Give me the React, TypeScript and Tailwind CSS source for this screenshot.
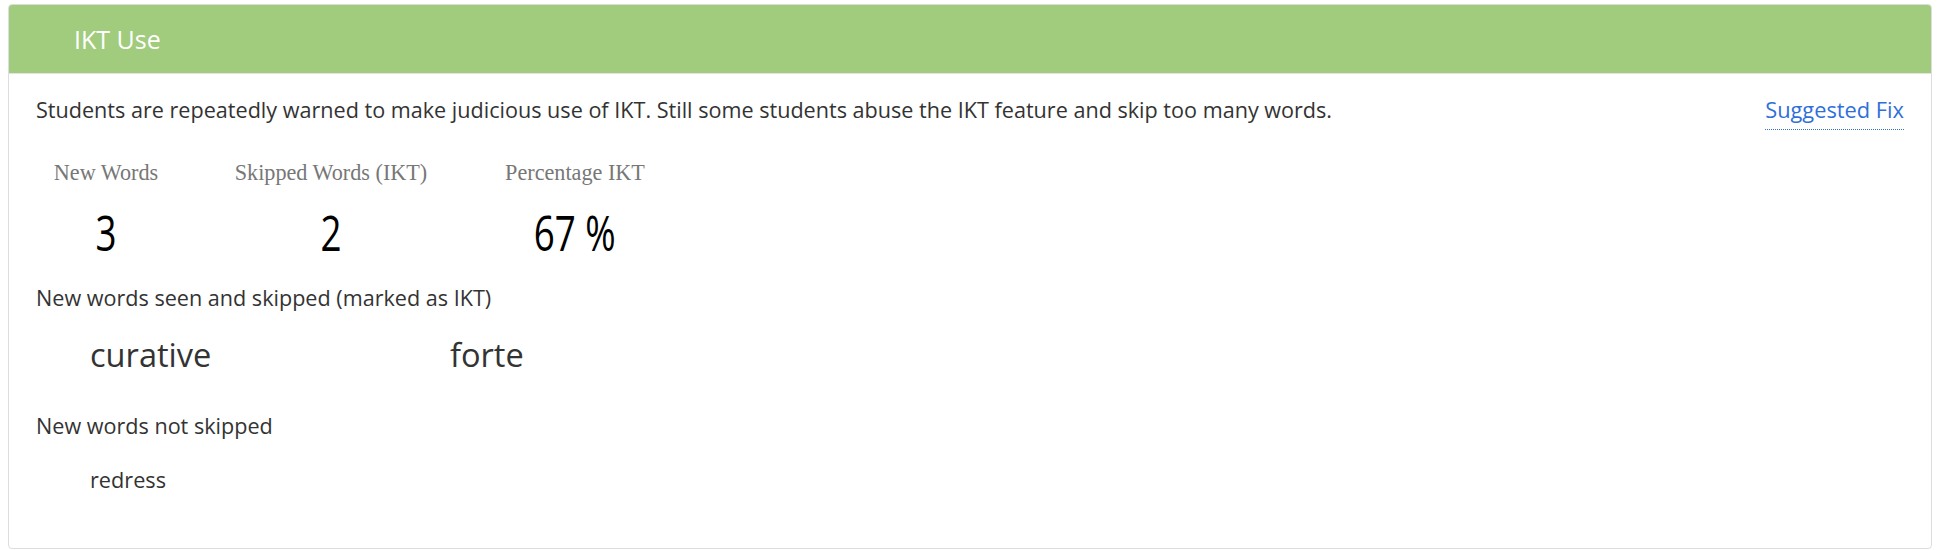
import React from "react";

export default function App() {
  return (
    <div className="w-[1942px] h-[550px] bg-white pt-[4px] pl-[8px] pr-[10px] font-['Open_Sans',sans-serif] text-[#333]">
      <div className="border border-[#dddddd] rounded-[4px] overflow-hidden">
        <div className="h-[69px] bg-[#a1cb7d] border-b border-[#e4e4e4] flex items-center pl-[65px]">
          <span className="text-[25px] text-white leading-[34px]">IKT Use</span>
        </div>
        <div className="px-[27px] pt-[22px] pb-[54px]">
          <div className="flex justify-between items-start h-[28px]">
            <p className="text-[21.6px] leading-[28px]">
              Students are repeatedly warned to make judicious use of IKT. Still some students abuse the IKT feature and skip too many words.
            </p>
            <a className="text-[21.8px] leading-[28px] text-[#2f6fd8] border-b border-dotted border-[#2f6fd8] pb-[5px]">
              Suggested Fix
            </a>
          </div>

          <div className="flex mt-[35px]">
            {[
              { label: "New Words", value: "3", w: "w-[140px]" },
              { label: "Skipped Words (IKT)", value: "2", w: "w-[310px]" },
              { label: "Percentage IKT", value: "67 %", w: "w-[178px]" },
            ].map((s) => (
              <div key={s.label} className={`${s.w} flex flex-col items-center`}>
                <div className="font-['Liberation_Serif',serif] text-[22.2px] leading-[28px] text-[#777] whitespace-nowrap">
                  {s.label}
                </div>
                <div className="mt-[17px] h-[56px] flex items-center">
                  <span className="inline-block text-[49px] leading-[56px] text-black scale-x-[0.75] whitespace-nowrap">
                    {s.value}
                  </span>
                </div>
              </div>
            ))}
          </div>

          <div className="mt-[24px] text-[21.6px] leading-[28px]">New words seen and skipped (marked as IKT)</div>
          <div className="mt-[23px] pl-[54px] flex">
            <div className="w-[360px] text-[32.6px] leading-[40px]">curative</div>
            <div className="w-[360px] text-[32.6px] leading-[40px]">forte</div>
          </div>

          <div className="mt-[37px] text-[21.6px] leading-[28px]">New words not skipped</div>
          <div className="mt-[26px] pl-[54px] flex">
            <div className="text-[21.7px] leading-[28px]">redress</div>
          </div>
        </div>
      </div>
    </div>
  );
}
